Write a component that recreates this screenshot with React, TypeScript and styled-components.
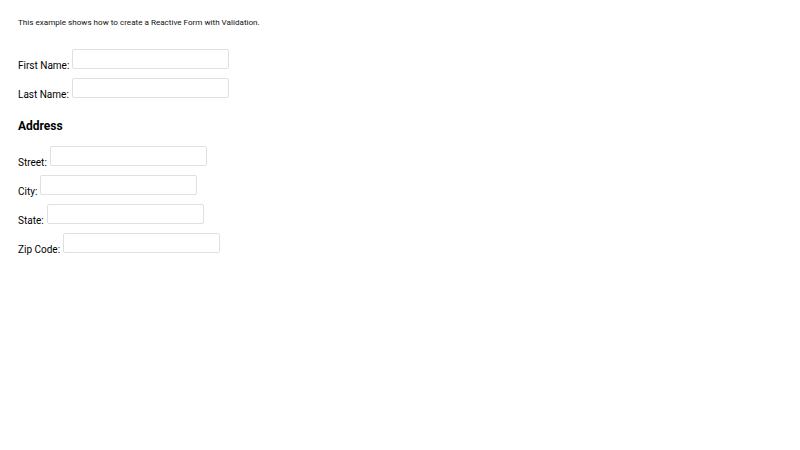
import React from "react";
import styled, { createGlobalStyle } from "styled-components";

const GlobalStyle = createGlobalStyle`
    body {
        margin: 0;
        background: #ffffff;
        font-family: Roboto, "Liberation Sans", sans-serif;
        color: #000000;
    }
`;

const Page = styled.div`
    padding: 16px 18px;
`;

const Intro = styled.p`
    margin: 0 0 21px;
    font-size: 8.1px;
    line-height: 12px;
    color: #111111;
`;

const Form = styled.form`
    display: flex;
    flex-direction: column;
    row-gap: 9px;
`;

const Row = styled.label`
    display: flex;
    align-items: flex-end;
    column-gap: 3px;
`;

const Caption = styled.span`
    font-size: 10px;
    line-height: 10px;
    margin-bottom: -2px;
`;

const Field = styled.input`
    box-sizing: border-box;
    width: 157px;
    height: 20px;
    margin: 0;
    border: 1px solid #e0e0e0;
    border-radius: 2px;
    background: #ffffff;
    outline: none;
`;

const Heading = styled.h3`
    margin: 11px 0 3px;
    font-size: 12px;
    line-height: 16px;
    font-weight: 700;
`;

type TField = {
    name: string
    label: string
};

const personFields: TField[] = [
    { name: "firstName", label: "First Name:" },
    { name: "lastName", label: "Last Name:" }
];

const addressFields: TField[] = [
    { name: "street", label: "Street:" },
    { name: "city", label: "City:" },
    { name: "state", label: "State:" },
    { name: "zip", label: "Zip Code:" }
];

const renderField = ({ name, label }: TField) => (
    <Row key={name}>
        <Caption>{label}</Caption>
        <Field type="text" name={name} />
    </Row>
);

const App = () => {
    return (
        <>
            <GlobalStyle />
            <Page>
                <Intro>This example shows how to create a Reactive Form with Validation.</Intro>
                <Form>
                    {personFields.map(renderField)}
                    <Heading>Address</Heading>
                    {addressFields.map(renderField)}
                </Form>
            </Page>
        </>
    );
};

export default App;
